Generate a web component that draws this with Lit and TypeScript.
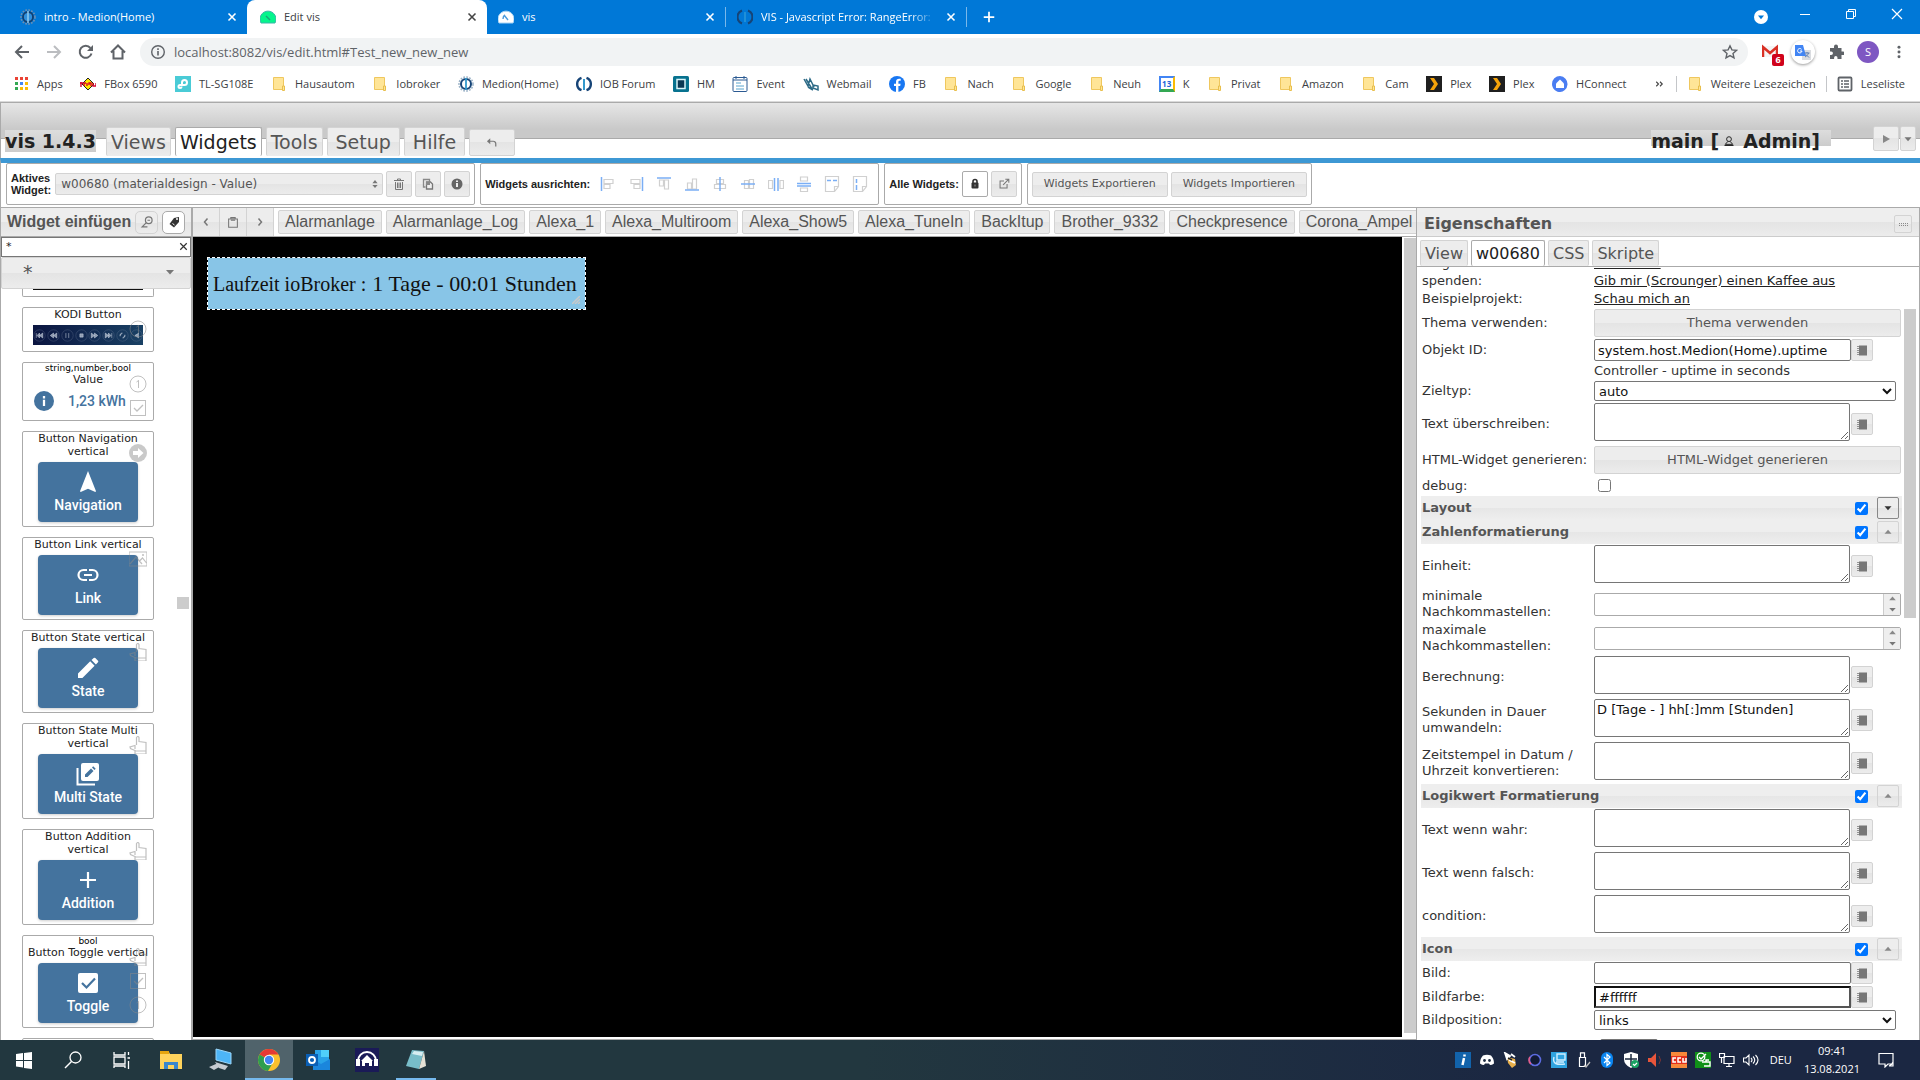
import { LitElement, html, svg, css, nothing, TemplateResult } from "lit";
import { customElement } from "lit/decorators.js";
import { classMap } from "lit/directives/class-map.js";

const icon = (body: unknown, size = 16, box = 16) => html`<svg
  width=${size} height=${size} viewBox="0 0 ${box} ${box}" aria-hidden="true">${body}</svg>`;

const line = (d: string, color: string, w = 1) =>
  svg`<path d=${d} fill="none" stroke=${color} stroke-width=${w} />`;
const fill = (d: string, color: string) => svg`<path d=${d} fill=${color} />`;

const glyph = {
  iob: svg`<circle cx="8" cy="8" r="6.500" fill="#fff"/><path d="M5.500 1.800a6.600 6.600 0 0 0 0 12.400M10.500 1.800a6.600 6.600 0 0 1 0 12.400" fill="none" stroke="#164477" stroke-width="2.400"/><path d="M8 3v11" stroke="#3399cc" stroke-width="2"/>`,
  iobGear: svg`<circle cx="8" cy="8" r="7" fill="none" stroke="#9db4c8" stroke-width="1.600" stroke-dasharray="1.800 1.200"/><circle cx="8" cy="8" r="5" fill="#fff" stroke="#164477" stroke-width="2"/><path d="M8 2v12" stroke="#3399cc" stroke-width="1.800"/>`,
  iobTab: svg`<circle cx="8" cy="8" r="7" fill="none" stroke="#6c8fb3" stroke-width="1.600" stroke-dasharray="1.800 1.200"/><circle cx="8" cy="8" r="5" fill="#2f8fdc" stroke="#123f70" stroke-width="1.800"/><path d="M8 2v12" stroke="#8cc8ee" stroke-width="1.600"/>`,
  iobDark: svg`<path d="M5 1.600a6.800 6.800 0 0 0 0 12.800M11 1.600a6.800 6.800 0 0 1 0 12.800" fill="none" stroke="#164477" stroke-width="2.200"/><path d="M8 3v10" stroke="#1f8fd8" stroke-width="2"/>`,
  gaugeGreen: svg`<path d="M1 14a8 8 0 1 1 14 0z" fill="#05f58c" stroke="#3bb5a8"/><path d="M6 7l4 4" stroke="#1aa37a" stroke-width="1.500"/>`,
  gaugeWhite: svg`<path d="M1 14a8 8 0 1 1 14 0z" fill="#fff" stroke="#a8d4f5"/><path d="M6 6l4 5M5 10q0-3 2-4" stroke="#4b9bdc" stroke-width="1.400" fill="none"/>`,
  apps: svg`${["#ea4335", "#ea4335", "#ea4335", "#34a853", "#4285f4", "#fbbc05", "#34a853", "#fbbc05", "#fbbc05"].map(
    (c, i) => svg`<rect x=${2 + (i % 3) * 5} y=${1 + Math.floor(i / 3) * 5} width="3" height="3" fill=${c}/>`)}`,
  fritz: svg`<path d="M8 2l6 6-6 6-6-6z" fill="#ffe600" stroke="#222"/><path d="M0 7h3M1 6v5M4 10V7h2M7 7v3M9 9V7h2v3M13 7v3h3V7" stroke="#d40030" stroke-width="1.400" fill="none"/>`,
  tp: svg`<rect width="16" height="16" fill="#4acbd6"/><path d="M7 9V6.500a2.500 2.500 0 1 1 2.500 2.500H5a1.500 1.500 0 1 0 1.500 1.500" fill="none" stroke="#fff" stroke-width="2"/>`,
  folder: svg`<path d="M2.500 1.500h10v12h-10z" fill="#ffe597" stroke="#efc75e"/><path d="M11.500 10v4.500h2V10z" fill="#ffe597" stroke="#e8bf4c"/>`,
  hm: svg`<rect width="16" height="16" rx="1.500" fill="#07728f"/><rect x="4" y="3.500" width="8" height="9" fill="#0b3954" stroke="#d9f5fa" stroke-width="1.500"/>`,
  event: svg`<rect x="1" y="1.500" width="14" height="14" rx="1" fill="#fff" stroke="#2b5a92"/><path d="M1 4h14M4 0v3M12 0v3" stroke="#2b5a92"/><path d="M4 7h5M4 10h8M4 13h8" stroke="#58a4ce"/>`,
  webmail: svg`<path d="M1 3l4 7 2-7 4 8M3 3l6 10M10 9l5 1v4l-5-2zM5 11l5 3" fill="none" stroke="#2c6a86" stroke-width="1.500"/>`,
  fb: svg`<circle cx="8" cy="8" r="8" fill="#1877f2"/><path d="M7 16v-6H5V7.700h2V6c0-2.200 1.200-3.300 3.200-3.300l1.500.1v2h-1C9.800 4.800 9.400 5.300 9.400 6v1.700h2.200L11.200 10H9.400v6z" fill="#fff"/>`,
  plex: svg`<rect width="16" height="16" fill="#1f1f1f"/><path d="M4 2h4l4 6-4 6H4l4-6z" fill="#f5a30a"/>`,
  hconnect: svg`<path d="M8 0a8 8 0 1 1-1 16C3 15.500 0 12 0 8a8 8 0 0 1 8-8z" fill="#4a7df2"/><path d="M8 3.500l4 4V12H4V7.500z" fill="#fff"/>`,
  list: svg`<rect x="1.500" y="1.500" width="13" height="13" rx="1" fill="none" stroke="#5f6368" stroke-width="1.800"/><path d="M4 5h2M4 8h2M4 11h2M7 5h5M7 8h5M7 11h5" stroke="#5f6368" stroke-width="1.500"/>`,
  back: line("M15 8H2M8 2L2 8l6 6", "#5f6368", 2),
  forward: line("M1 8h13M8 2l6 6-6 6", "#bbbdc0", 2),
  reload: svg`${line("M13.500 9.500A6 6 0 1 1 12.400 4", "#5f6368", 2)}${fill("M15 1v6H9z", "#5f6368")}`,
  home: line("M1 8.500L8 1.500l7 7M3.500 7v7.500h9V7", "#5f6368", 2),
  info: svg`<circle cx="8" cy="8" r="6.300" fill="none" stroke="#5f6368" stroke-width="1.400"/><path d="M8 7v4.500M8 4.300v1.600" stroke="#5f6368" stroke-width="1.600"/>`,
  star: line("M8 1.800l1.900 4.100 4.500.5-3.400 3 1 4.500L8 11.600l-4 2.300 1-4.500-3.400-3 4.500-.5z", "#5f6368", 1.4),
  gmail: svg`<path d="M1 2h14v11H1z" fill="#f5f5f5"/><path d="M1 13V3l7 6 7-6v10" fill="none" stroke="#d93025" stroke-width="2.500"/>`,
  translate: svg`<rect x="7" y="6" width="9" height="10" fill="#dadce0"/><path d="M0 1h8l3 11H0z" fill="#4285f4"/><path d="M6.500 5.300A2.200 2.200 0 1 0 7 7H5" stroke="#fff" fill="none"/><path d="M9.500 9h5M12 8v1M13.500 9c-.5 2-2 3-3.500 4M11 10.500l3 3" stroke="#5f7fb0" fill="none"/>`,
  puzzle: fill("M6 2.500a2 2 0 0 1 4 0V4h3.500v3.500H15a1.800 1.800 0 0 1 0 3.600h-1.500V15h-4v-1.200a1.700 1.700 0 0 0-3.400 0V15H2v-4h1.200a1.700 1.700 0 0 0 0-3.500H2V4h4z", "#5f6368"),
  dots: svg`<circle cx="8" cy="2.500" r="1.700" fill="#5f6368"/><circle cx="8" cy="8" r="1.700" fill="#5f6368"/><circle cx="8" cy="13.500" r="1.700" fill="#5f6368"/>`,
  undo: svg`${line("M4 6h5.500a2.800 2.800 0 0 1 2.800 2.800V12", "#777", 1.4)}${fill("M6 2.500V9.500L2.200 6z", "#777")}`,
  user: svg`<circle cx="8" cy="5.500" r="3.200" fill="none" stroke="#222" stroke-width="1.300"/><path d="M6.500 8.500L3 12.500h10L9.500 8.500M2 14h12" fill="none" stroke="#222" stroke-width="1.300"/>`,
  trash: svg`<path d="M3 4.500h10M6.500 4V3h3v1M4.500 6v7.500h7V6M6.500 6.500v5.500M8 6.500v5.500M9.500 6.500v5.500" fill="none" stroke="#777"/>`,
  copy: svg`<path d="M5.500 11H3.500V3.500h6v2" fill="none" stroke="#888" stroke-width="1.300"/><path d="M6.500 6h4l2 2v5h-6z" fill="#eee" stroke="#777" stroke-width="1.300"/><path d="M6 6h4v3h-4z" fill="#888"/>`,
  infoFull: svg`<circle cx="8" cy="8" r="5.500" fill="#666"/><path d="M8 7v4M8 4.500v1.600" stroke="#eee" stroke-width="2"/>`,
  lock: svg`<path d="M6 7V5.500a2 2 0 0 1 4 0V7" fill="none" stroke="#333" stroke-width="1.600"/><rect x="4.500" y="6.500" width="7" height="6" rx="1" fill="#333"/><path d="M8 8.500v2" stroke="#999"/>`,
  extern: line("M8 4.500H3.500v8h8V8M9.500 2.500h4v4M13.500 2.500L7 9", "#777", 1.2),
  zoomOut: svg`<circle cx="10" cy="6" r="3.800" fill="none" stroke="#777" stroke-width="1.400"/><path d="M8.500 6h3M7 9l-4.500 4.500h6" fill="none" stroke="#777" stroke-width="1.400"/>`,
  tag: svg`<path d="M8 4l5-1v5l-5 5.500-4.500-3.500z" fill="#333"/><circle cx="11" cy="5" r="1" fill="#fff"/><path d="M6.500 9.500l2 1.500" stroke="#fff"/>`,
  left: line("M9.500 4.500L6.500 8l3 3.500", "#777", 1.5),
  right: line("M6.500 4.500L9.500 8l-3 3.500", "#777", 1.5),
  clip: line("M3 4.500h10v9.500H3zM5.500 4.500V3h5v1.500M5.500 6h5", "#777", 1.2),
  down: fill("M4 6h8l-4 4.500z", "#777"),
  downDark: fill("M4 6h8l-4 4.500z", "#333"),
  up: fill("M4 10h8L8 5.500z", "#888"),
  play: fill("M5 4v8l7-4z", "#888"),
  updown: fill("M5 7h6L8 3.500zM5 9h6l-3 3.500z", "#777"),
  grip: svg`<path d="M4 7.500h9M4 9.500h9" stroke="#888" stroke-dasharray="1 1"/>`,
  book: svg`<rect x="5" y="3.500" width="8" height="10" fill="#777"/><path d="M4 4v9" stroke="#777" stroke-width="1.500" stroke-dasharray="1 1"/>`,
  navigation: fill("M12 1L20 21.300l-.7.7L12 18.700 4.700 22l-.7-.7z", "#fff"),
  link: line("M11 17H7.500a5 5 0 0 1 0-10H11M13 7h3.500a5 5 0 0 1 0 10H13M8 12h8", "#fff", 2.2),
  pencil: fill("M2 17.600V22h4.400L18.600 9.700l-4.400-4.400zM22 6.300a1.200 1.200 0 0 0 0-1.600L19.300 2a1.200 1.200 0 0 0-1.600 0L15.500 4.100l4.400 4.400z", "#fff"),
  multi: svg`<path d="M1.500 6v16.500H19" fill="none" stroke="#fff" stroke-width="2"/><rect x="5" y="1" width="18" height="18" rx="2" fill="#fff"/><path d="M9 15v-2.500l6-6 2.500 2.500-6 6zM16 5.500l1.200-1.200 2.500 2.500L18.500 8z" fill="#44739e"/>`,
  plus: line("M12 4v16M4 12h16", "#fff", 2.2),
  toggle: svg`<rect x="2" y="2" width="20" height="20" rx="2" fill="#fff"/><path d="M6 12l4.500 4.500L19 7.500" fill="none" stroke="#44739e" stroke-width="2.200"/>`,
  one: svg`<circle cx="9" cy="9" r="8" fill="none" stroke="#8888" stroke-width="1"/><path d="M7.500 7L9.500 5.500V13" fill="none" stroke="#8888"/>`,
  tick: svg`<rect x="1.500" y="1.500" width="15" height="15" fill="none" stroke="#8888"/><path d="M5 9l3 3 6-6" fill="none" stroke="#8888" stroke-width="1.300"/>`,
  hand: svg`<path d="M6 13V9.500L1 11l.5 1.500L7 15h10V6.500L10 5.500V1.500Q9-.5 7.500 1.500V9M6 14.500V18h11v-4" fill="none" stroke="#8888" stroke-width="1.200"/>`,
  arrow: svg`<circle cx="9" cy="9" r="9" fill="#c2c2c2e0"/><path d="M4 7h5V4l5.500 5L9 14v-3H4z" fill="#fff"/>`,
  image: svg`<path d="M0 2h18v14H0zM1 14l6-7 6 7M10.500 11l3-3 4 5" fill="none" stroke="#8888" stroke-width="1.200"/><circle cx="14" cy="5" r="1" fill="#8888"/>`,
};

/* Alignment symbols: grey blocks beside a blue guide line. */
const G = "#d0d0d0";
const B = "#7aaef5";
const ALIGN: [string, string, string][] = [
  ["Links", "M4 3.500h9v4H4zM4 8.500h6v4H4z", "M1.500 1v14"],
  ["Rechts", "M3 3.500h9v4H3zM6 8.500h6v4H6z", "M14.500 1v14"],
  ["Oben", "M3.500 4h4v6h-4zM8.500 4h4v9h-4z", "M1 2h14"],
  ["Unten", "M3.500 7h4v6h-4zM8.500 3h4v10h-4z", "M1 14h14"],
  ["Mitte horizontal", "M4.500 3.500h7v4h-7zM2.500 8.500h11v4h-11z", "M8 1v14"],
  ["Mitte vertikal", "M4.500 4.500h4v8h-4zM9.500 3.500h4v9h-4z", "M1 8h14"],
  ["Gleiche Breite", "M.5 4.500h4v8h-4zM12 4.500h3.500v8H12z", "M6.500 2v13M10 2v13"],
  ["Gleiche Höhe", "M4.500 1h7v4h-7zM4.500 12h7v3.500h-7z", "M1 7.500h14M1 10h14"],
  ["Seite horizontal", "M1.500 .5h13v10l-4 5h-9zM14.500 10.500h-4v5", "M3 4.500h4M9 4.500h4"],
  ["Seite vertikal", "M1.500 .5h13v10l-4 5h-9zM14.500 10.500h-4v5", "M4.500 3v4M4.500 9v5"],
];

interface Bookmark { label: string; art: unknown; day?: boolean }
const b = (label: string, art: unknown, day = false): Bookmark => ({ label, art, day });
const BOOKMARKS: Bookmark[] = [
  b("Apps", glyph.apps), b("FBox 6590", glyph.fritz), b("TL-SG108E", glyph.tp),
  b("Hausautom", glyph.folder), b("Iobroker", glyph.folder), b("Medion(Home)", glyph.iobGear),
  b("IOB Forum", glyph.iob), b("HM", glyph.hm), b("Event", glyph.event), b("Webmail", glyph.webmail),
  b("FB", glyph.fb), b("Nach", glyph.folder), b("Google", glyph.folder), b("Neuh", glyph.folder),
  b("K", nothing, true), b("Privat", glyph.folder), b("Amazon", glyph.folder), b("Cam", glyph.folder),
  b("Plex", glyph.plex), b("Plex", glyph.plex), b("HConnect", glyph.hconnect),
];

const VIEWS = ["Alarmanlage", "Alarmanlage_Log", "Alexa_1", "Alexa_Multiroom", "Alexa_Show5",
  "Alexa_TuneIn", "BackItup", "Brother_9332", "Checkpresence", "Corona_Ampel"];

interface Card { title: string; type?: string; label: string; art: unknown; marks: unknown[] }
const CARDS: Card[] = [
  { title: "Button Navigation vertical", label: "Navigation", art: glyph.navigation, marks: [glyph.arrow] },
  { title: "Button Link vertical", label: "Link", art: glyph.link, marks: [glyph.image] },
  { title: "Button State vertical", label: "State", art: glyph.pencil, marks: [glyph.hand] },
  { title: "Button State Multi vertical", label: "Multi State", art: glyph.multi, marks: [glyph.hand] },
  { title: "Button Addition vertical", label: "Addition", art: glyph.plus, marks: [glyph.hand] },
  { title: "Button Toggle vertical", type: "bool", label: "Toggle", art: glyph.toggle, marks: [glyph.hand, glyph.tick, glyph.one] },
];

type Row = { kind: string; label: string; value?: string; open?: boolean };
const r = (kind: string, label: string, value = "", open = true): Row => ({ kind, label, value, open });
const ROWS: Row[] = [
  r("link", "Fragen und Antworten:", "Lies mich!"),
  r("link", "spenden:", "Gib mir (Scrounger) einen Kaffee aus"),
  r("link", "Beispielprojekt:", "Schau mich an"),
  r("action", "Thema verwenden:", "Thema verwenden"),
  r("input", "Objekt ID:", "system.host.Medion(Home).uptime"),
  r("note", "", "Controller - uptime in seconds"),
  r("select", "Zieltyp:", "auto"),
  r("area", "Text überschreiben:"),
  r("action", "HTML-Widget generieren:", "HTML-Widget generieren"),
  r("check", "debug:"),
  r("group", "Layout", "", false),
  r("group", "Zahlenformatierung"),
  r("area", "Einheit:"),
  r("spin", "minimale Nachkommastellen:"),
  r("spin", "maximale Nachkommastellen:"),
  r("area", "Berechnung:"),
  r("area", "Sekunden in Dauer umwandeln:", "D [Tage - ] hh[:]mm [Stunden]"),
  r("area", "Zeitstempel in Datum / Uhrzeit konvertieren:"),
  r("group", "Logikwert Formatierung"),
  r("area", "Text wenn wahr:"),
  r("area", "Text wenn falsch:"),
  r("area", "condition:"),
  r("group", "Icon"),
  r("input", "Bild:"),
  r("color", "Bildfarbe:", "#ffffff"),
  r("select", "Bildposition:", "links"),
  r("small", ""),
];

const reset = css`
  :host, * { box-sizing: border-box; }
  button, input, textarea, select { font: inherit; margin: 0; color: inherit; }
  button { padding: 0; border: 0; background: none; display: inline-flex; align-items: center; justify-content: center; white-space: nowrap; }
  a { color: inherit; text-decoration: none; }
  svg { display: block; flex: none; }
`;

const jq = css`
  .btn {
    border: 1px solid #d3d3d3; border-radius: 2px; color: #555;
    background: linear-gradient(#ededed 50%, #e4e4e4 50%, #ececec);
  }
  .btn.on { background: #fff; border-color: #aaa; color: #212121; }
`;

@customElement("browser-chrome")
class BrowserChrome extends LitElement {
  static styles = [reset, css`
    :host { display: block; flex: none; background: #fff; font: 11px/16px "Open Sans", "Noto Sans", sans-serif; color: #3c4043; border-bottom: 1px solid #dadada; }
    .strip { display: flex; height: 34px; background: #0078d7; color: #fff; }
    .tab { display: flex; align-items: center; gap: 8px; width: 240px; padding: 0 8px 0 13px; }
    .tab.first { width: 247px; padding-left: 20px; }
    .tab.active { background: #fff; color: #3c4043; border-radius: 8px 8px 0 0; }
    .tab.vis { padding-left: 11px; width: 238px; }
    .tab.last { padding-left: 11px; }
    .tab span { flex: 1; white-space: nowrap; overflow: hidden; }
    .tab.last span { mask-image: linear-gradient(90deg, #000 85%, transparent); }
    .bar { width: 1px; height: 20px; align-self: center; background: #7ab8ea; }
    .new { width: 44px; }
    .win { margin-left: auto; display: flex; align-items: center; }
    .win button { width: 46px; height: 28px; align-self: flex-start; }
    .win .drop { width: 14px; height: 14px; border-radius: 50%; background: #fff; margin-right: 14px; align-self: center; }
    .nav { display: flex; align-items: center; height: 36px; padding: 0 14px; gap: 16px; }
    .omni { flex: 1; display: flex; align-items: center; gap: 8px; height: 28px; margin: 0 -2px; padding: 0 10px; border-radius: 14px; background: #f1f3f4; font-size: 13px; color: #5f6368; }
    .url { flex: 1; min-width: 0; border: 0; background: none; outline: 0; color: #5f6368; padding: 0; height: 24px; }
    .ext { display: flex; align-items: center; gap: 13px; }
    .gmail { position: relative; }
    .count { position: absolute; right: -6px; bottom: -6px; width: 12px; height: 12px; border-radius: 2px; background: #d0021b; color: #fff; font: bold 9px/12px "Open Sans", sans-serif; text-align: center; }
    .tr { width: 24px; height: 24px; border-radius: 50%; box-shadow: 0 1px 3px #0006; }
    .avatar { width: 22px; height: 22px; border-radius: 50%; background: #7e57c2; color: #fff; }
    .marks { display: flex; align-items: center; height: 31px; padding: 0 15px 3px 13px; gap: 27px; white-space: nowrap; }
    .saved { flex: 1; display: flex; justify-content: space-between; }
    .mark { display: flex; align-items: center; gap: 8px; }
    .more { display: flex; align-items: center; gap: 10px; }
    .sep { width: 1px; height: 16px; background: #c4c6c9; }
    .day { width: 16px; height: 16px; border: 2px solid #4285f4; border-right-color: #fbbc04; border-bottom: 3px solid #34a853; font: bold 8px/11px "Open Sans", sans-serif; color: #2166d8; text-align: center; }
  `];
  render() {
    const x = (c: string) => icon(line("M4 4l8 8M12 4l-8 8", c, 1.8), 14);
    return html`
      <div class="strip" role="tablist">
        <div class="tab first" role="tab">${icon(glyph.iobTab)}<span>intro - Medion(Home)</span><button aria-label="Tab schließen">${x("#fff")}</button></div>
        <div class="tab active" role="tab">${icon(glyph.gaugeGreen)}<span>Edit vis</span><button aria-label="Tab schließen">${x("#444")}</button></div>
        <div class="tab vis" role="tab">${icon(glyph.gaugeWhite)}<span>vis</span><button aria-label="Tab schließen">${x("#fff")}</button></div>
        <i class="bar"></i>
        <div class="tab last" role="tab">${icon(glyph.iobDark)}<span>VIS - Javascript Error: RangeError:</span><button aria-label="Tab schließen">${x("#fff")}</button></div>
        <i class="bar"></i>
        <button class="new" aria-label="Neuer Tab">${icon(line("M8 2v12M2 8h12", "#fff", 2), 14)}</button>
        <div class="win">
          <button class="drop" aria-label="Tabs suchen">${icon(fill("M4 6h8l-4 5z", "#0078d7"), 12)}</button>
          <button aria-label="Minimieren">${icon(line("M3 8.500h10", "#fff"))}</button>
          <button aria-label="Verkleinern">${icon(line("M3.500 5.500h7v7h-7zM5.500 5.500v-2h7v7h-2", "#fff"))}</button>
          <button aria-label="Schließen">${icon(line("M3 3l10 10M13 3L3 13", "#fff", 1.2))}</button>
        </div>
      </div>
      <div class="nav">
        <button aria-label="Zurück">${icon(glyph.back)}</button>
        <button aria-label="Vorwärts">${icon(glyph.forward)}</button>
        <button aria-label="Neu laden">${icon(glyph.reload)}</button>
        <button aria-label="Startseite">${icon(glyph.home)}</button>
        <div class="omni">${icon(glyph.info)}
          <input class="url" aria-label="Adresse" value="localhost:8082/vis/edit.html#Test_new_new_new">
          <button aria-label="Lesezeichen">${icon(glyph.star)}</button></div>
        <div class="ext">
          <button class="gmail" aria-label="Gmail">${icon(glyph.gmail)}<b class="count">6</b></button>
          <button class="tr" aria-label="Übersetzen">${icon(glyph.translate)}</button>
          <button aria-label="Erweiterungen">${icon(glyph.puzzle)}</button>
          <button class="avatar">S</button>
          <button aria-label="Menü">${icon(glyph.dots, 14)}</button>
        </div>
      </div>
      <nav class="marks">
        <div class="saved">
          ${BOOKMARKS.map((m) => html`<a class="mark" href="#">${m.day ? html`<span class="day">13</span>` : icon(m.art)}${m.label}</a>`)}
        </div>
        <div class="more">
          ${icon(line("M3 5l3 3-3 3M8 5l3 3-3 3", "#444", 1.5), 12)}
          <i class="sep"></i><a class="mark" href="#">${icon(glyph.folder)}Weitere Lesezeichen</a>
          <i class="sep"></i><a class="mark" href="#">${icon(glyph.list)}Leseliste</a>
        </div>
      </nav>`;
  }
}

@customElement("vis-menu")
class VisMenu extends LitElement {
  static styles = [reset, jq, css`
    :host { display: block; flex: none; font: 19px/22px "DejaVu Sans", Verdana, sans-serif; color: #222; }
    .menu { display: flex; align-items: flex-end; height: 56px; padding: 0 4px; border-top: 1px solid #aaa; border-left: 1px solid #aaa;
      background: linear-gradient(#e6e6e6, #c9c9c9 75%, #c9c9c9) 0 0 / 100% 35px no-repeat, linear-gradient(#aaa, #aaa) 0 35px / 100% 1px no-repeat, #fff; }
    .brand, .user { font-weight: bold; height: 22px; margin-bottom: 6px; white-space: nowrap; }
    .brand { margin-right: 10px; background: linear-gradient(#ddd, #ccc); }
    .tabs { display: flex; gap: 4px; align-items: flex-end; }
    .tab { height: 29px; padding: 0 4px; border-bottom: 0; margin-bottom: 2px; }
    .tab.wide { padding: 0 8px; }
    .undo { width: 46px; height: 27px; margin-bottom: 2px; }
    .user { margin-left: auto; display: flex; align-items: center; margin-right: 42px; padding-right: 11px; background: linear-gradient(#ddd, #ccc) 0 0 / 100% 16px no-repeat; }
    .user svg { margin: 0 8px 0 4px; }
    .run { display: flex; gap: 1px; margin-bottom: 7px; }
    .run .go { width: 26px; height: 25px; }
    .run .pick { width: 16px; height: 25px; }
    .tools { display: flex; gap: 5px; height: 49px; padding: 0 6px 2px 5px; border-top: 5px solid #3d98d4; border-left: 1px solid #aaa; font-size: 11px; line-height: 12px; }
    .set { display: flex; align-items: center; border: 1px solid #aaa; border-radius: 2px; padding: 0 4px; gap: 3px; }
    .cap { font: bold 11px/12px "Liberation Sans", Arial, sans-serif; color: #222; white-space: nowrap; }
    .pick-widget { display: flex; justify-content: space-between; width: 328px; height: 22px; padding: 0 0 0 5px; font-size: 12px; margin-left: 1px; }
    .sq { width: 26px; height: 26px; }
    .align { display: flex; gap: 12px; padding: 0 6px 0 7px; }
    .long { height: 25px; padding: 0 11px; }
  `];
  render() {
    return html`
      <div class="menu">
        <span class="brand">vis 1.4.3</span>
        <div class="tabs">
          <button class="btn tab">Views</button><button class="btn tab on">Widgets</button>
          <button class="btn tab">Tools</button><button class="btn tab wide">Setup</button><button class="btn tab wide">Hilfe</button>
          <button class="btn undo" aria-label="Rückgängig">${icon(glyph.undo, 14)}</button>
        </div>
        <span class="user">main [${icon(glyph.user, 12)}Admin]</span>
        <div class="run"><button class="btn go" aria-label="Starten">${icon(glyph.play)}</button><button class="btn pick" aria-label="Auswahl">${icon(glyph.down, 14)}</button></div>
      </div>
      <div class="tools">
        <div class="set">
          <span class="cap">Aktives<br>Widget:</span>
          <button class="btn pick-widget">w00680 (materialdesign - Value)${icon(glyph.updown, 14)}</button>
          <button class="btn sq" aria-label="Löschen">${icon(glyph.trash)}</button>
          <button class="btn sq" aria-label="Kopieren">${icon(glyph.copy)}</button>
          <button class="btn sq" aria-label="Info">${icon(glyph.infoFull)}</button>
        </div>
        <div class="set"><span class="cap">Widgets ausrichten:</span>
          <div class="align">${ALIGN.map(([name, block, guide]) => html`<button aria-label=${name}>${icon(svg`${line(block, G, 1.2)}${line(guide, B, 1.5)}`)}</button>`)}</div>
        </div>
        <div class="set"><span class="cap">Alle Widgets:</span>
          <button class="btn sq on" aria-label="Sperren">${icon(glyph.lock)}</button>
          <button class="btn sq" aria-label="Öffnen">${icon(glyph.extern, 14)}</button>
        </div>
        <div class="set"><button class="btn long">Widgets Exportieren</button><button class="btn long">Widgets Importieren</button></div>
      </div>`;
  }
}

@customElement("widget-palette")
class WidgetPalette extends LitElement {
  static styles = [reset, jq, css`
    :host { display: flex; flex-direction: column; width: 193px; flex: none; min-height: 0; border-left: 1px solid #aaa; border-right: 2px solid #aaa; font: 11px/13px "DejaVu Sans", Verdana, sans-serif; color: #222; }
    .head { display: flex; align-items: center; gap: 4px; height: 29px; flex: none; padding: 0 6px; border-bottom: 1px solid #aaa; background: linear-gradient(#eee 50%, #e4e4e4 50%, #ececec); }
    .head b { flex: 1; font: bold 16px/20px "Liberation Sans", Arial, sans-serif; color: #555; white-space: nowrap; }
    .rnd { width: 23px; height: 23px; border-radius: 5px; }
    .search { display: flex; align-items: center; height: 20px; flex: none; border: 1px solid #767676; padding: 0 0 2px 4px; }
    .search input { flex: 1; min-width: 0; border: 0; outline: 0; padding: 0; height: 17px; }
    .kind { height: 32px; flex: none; display: flex; justify-content: space-between; padding: 0 12px 2px 21px; font-size: 19px; }
    .list { position: relative; flex: 1; min-height: 0; overflow: hidden; display: flex; flex-direction: column; gap: 10px; padding: 0 37px 0 21px; }
    .card { position: relative; flex: none; border: 1px solid #aaa; border-radius: 2px; padding: 0 4px 4px; text-align: center; display: flex; flex-direction: column; align-items: center; }
    .cut { height: 8px; border-top: 0; border-radius: 0 0 2px 2px; }
    .cut i { width: 110px; height: 1px; background: #111; }
    .type { font-size: 9px; line-height: 10px; color: #000; }
    .tile { width: 100px; height: 60px; margin-top: 4px; border-radius: 4px; background: #44739e; box-shadow: 0 1px 3px #0003; color: #fff; flex-direction: column; gap: 2px; font: 500 14px/18px Roboto, sans-serif; }
    .marks { position: absolute; right: 6px; top: 12px; display: flex; flex-direction: column; gap: 6px; }
    .kodi { width: 110px; height: 20px; margin: 4px 0 2px; background: linear-gradient(90deg, #0b1540, #1a4164); display: flex; align-items: center; justify-content: space-around; }
    .value { display: flex; align-items: center; gap: 14px; width: 100%; height: 20px; margin: 5px 0; padding-left: 7px; font: 500 14px/18px Roboto, sans-serif; color: #44739e; }
    .thumb { position: absolute; right: 2px; top: 308px; width: 12px; height: 12px; background: #ccc; }
    .next { height: 12px; }
  `];
  render() {
    const keys = ["M4 5v6M12 5L8 8l4 3zM8 5L5 8l3 3z", "M8 5L4 8l4 3zM12 5L8 8l4 3z", "M6 5v6M9.500 5v6", "M6 6h4v4H6z", "M4 5l4 3-4 3zM8 5l4 3-4 3z", "M4 5l4 3-4 3zM8 5l3 3-3 3zM12 5v6", "M5 9a3 3 0 0 1 3-4M11 7a3 3 0 0 1-3 4", "M11 5L6 8l5 3"];
    return html`
      <div class="head"><b>Widget einfügen</b>
        <button class="btn rnd" aria-label="Verkleinern">${icon(glyph.zoomOut, 14)}</button>
        <button class="btn rnd on" aria-label="Filter">${icon(glyph.tag)}</button></div>
      <div class="search"><input aria-label="Filter" value="*"><button aria-label="Leeren">${icon(line("M4 4l8 8M12 4l-8 8", "#333", 1.5), 13)}</button></div>
      <button class="btn kind"><span>*</span>${icon(glyph.down)}</button>
      <div class="list">
        <div class="card cut"><i></i></div>
        <div class="card"><span>KODI Button</span>
          <div class="kodi">${keys.map((k) => icon(svg`<circle cx="8" cy="8" r="7" fill="none" stroke="#7d8da855"/>${svg`<path d=${k} fill="#c9d2dfaa" stroke="#c9d2dfaa"/>`}`, 13))}</div>
          <div class="marks">${icon(glyph.one, 18, 18)}</div></div>
        <div class="card"><span class="type">string,number,bool</span><span>Value</span>
          <div class="value">${icon(svg`<circle cx="8" cy="8" r="8" fill="#44739e"/><path d="M8 7v5M8 4v2" stroke="#fff" stroke-width="1.800"/>`, 20)}1,23 kWh</div>
          <div class="marks">${icon(glyph.one, 18, 18)}${icon(glyph.tick, 18, 18)}</div></div>
        ${CARDS.map((c) => html`<div class="card">
          ${c.type ? html`<span class="type">${c.type}</span>` : nothing}<span>${c.title}</span>
          <button class="tile">${icon(c.art, 24, 24)}${c.label}</button>
          <div class="marks">${c.marks.map((m) => icon(m, 18, 18))}</div></div>`)}
        <div class="card next"></div>
        <i class="thumb"></i>
      </div>`;
  }
}

@customElement("view-canvas")
class ViewCanvas extends LitElement {
  static styles = [reset, jq, css`
    :host { display: flex; flex-direction: column; flex: 1; min-width: 0; font: 16px/20px "Liberation Sans", Arial, sans-serif; }
    .views { display: flex; align-items: center; gap: 4px; height: 29px; flex: none; overflow: hidden; border-bottom: 1px solid #aaa; }
    .steps { display: flex; align-self: stretch; }
    .step { width: 27px; border-radius: 0; border-width: 0 1px 0 0; }
    .tab { flex: none; height: 24px; padding: 0 6px; }
    .row { flex: 1; display: flex; min-height: 0; justify-content: space-between; padding-bottom: 2px; background: #fff; border-bottom: 1px solid #aaa; }
    .stage { position: relative; flex: 1; background: #000; }
    .widget { position: absolute; left: 14px; top: 20px; width: 379px; height: 53px; padding-left: 5px; display: flex; align-items: center; gap: 6px; background: #88c5e7 padding-box; border: 1px dashed #fff; color: #111; font: 20px/24px "Liberation Serif", "Times New Roman", serif; white-space: nowrap; }
    .widget big { font-size: 22px; }
    .grip { position: absolute; right: 5px; bottom: 5px; }
    .scroll { width: 12px; background: #ccc; margin: 1px 0 4px 2px; }
  `];
  render() {
    return html`
      <div class="views"><div class="steps">
        <button class="btn step" aria-label="Zurück">${icon(glyph.left)}</button>
        <button class="btn step" aria-label="Liste">${icon(glyph.clip, 14)}</button>
        <button class="btn step" aria-label="Weiter">${icon(glyph.right)}</button></div>
        ${VIEWS.map((v) => html`<button class="btn tab">${v}</button>`)}</div>
      <div class="row">
        <div class="stage"><div class="widget"><span>Laufzeit ioBroker :</span><big>1 Tage - 00:01 Stunden</big>
          <span class="grip">${icon(line("M0 8L8 0M3 8l5-5M6 8l2-2", "#c9c9c9", 1.5), 8, 8)}</span></div></div>
        <i class="scroll"></i>
      </div>`;
  }
}

@customElement("property-panel")
class PropertyPanel extends LitElement {
  static styles = [reset, jq, css`
    :host { display: flex; flex-direction: column; width: 504px; flex: none; min-height: 0; border: solid #aaa; border-width: 0 1px; font: 13px/16px "DejaVu Sans", Verdana, sans-serif; color: #333; }
    .head { display: flex; align-items: center; justify-content: space-between; height: 29px; flex: none; padding: 3px 7px 0; border-bottom: 1px solid #ccc; background: linear-gradient(#eee 50%, #e4e4e4 50%, #ececec); font-size: 16px; color: #555; }
    .mini { width: 18px; height: 18px; }
    .tabs { display: flex; gap: 3px; height: 30px; flex: none; padding: 3px 3px 0; border-bottom: 1px solid #aaa; font-size: 16px; }
    .tab { padding: 0 4px; height: 26px; border-bottom: 0; }
    .body { position: relative; flex: 1; min-height: 0; overflow: hidden; padding: 0 17px 0 4px; }
    .form { margin-top: -13px; }
    .row { display: grid; grid-template-columns: 172px 1fr; align-items: center; padding: 0 1px; min-height: 24px; }
    .row.link, .row.note { min-height: 18px; }
    .row.action { min-height: 30px; }
    .row.select { min-height: 22px; }
    .row.area { min-height: 43px; }
    .row.spin { min-height: 34px; }
    .row.check { min-height: 21px; }
    .control { display: flex; align-items: center; }
    a { text-decoration: underline; color: #222; }
    .wide { flex: 1; height: 28px; }
    input, textarea, select { color: #111; background: #fff; border: 1px solid #767676; border-radius: 2px; }
    .text { flex: 1; min-width: 0; height: 22px; padding: 0 3px; }
    .text.color { border-width: 2px; border-color: #111 #555 #555 #111; border-radius: 0; }
    .book { width: 22px; height: 22px; margin-right: 28px; flex: none; }
    select { flex: 1; height: 20px; padding: 0; margin-right: 5px; }
    textarea { flex: 1; min-width: 0; height: 38px; padding: 2px; margin: 1px 1px 4px 0; resize: both; overflow: hidden; }
    .spinner { flex: 1; display: flex; height: 23px; border: 1px solid #aaa; border-radius: 2px; }
    .spinner input { flex: 1; min-width: 0; border: 0; }
    .arrows { display: flex; flex-direction: column; width: 17px; border-left: 1px solid #ccc; }
    .arrows button { flex: 1; background: #eee; overflow: hidden; }
    input[type="checkbox"] { width: 13px; height: 13px; }
    .debug { margin-left: 4px; }
    .group { display: flex; align-items: center; height: 24px; padding: 0 3px 0 1px; background: linear-gradient(#eee 50%, #e6e6e6 50%, #eee); font-weight: bold; color: #555; }
    .group label { flex: 1; }
    .group .fold { width: 22px; height: 22px; margin-left: 9px; }
    .group .fold.shut { border-color: #888; }
    .small { width: 58px; height: 22px; margin: 4px 2px 0 3px; }
    .sbtn { width: 17px; height: 18px; margin-top: 6px; }
    .thumb { position: absolute; right: 3px; top: 42px; width: 12px; height: 309px; background: #ccc; }
  `];
  private book = () => html`<button class="btn book" aria-label="Auswählen">${icon(glyph.book)}</button>`;
  private control(row: Row, id: string): TemplateResult {
    switch (row.kind) {
      case "link": return html`<a id=${id} href="#">${row.value}</a>`;
      case "action": return html`<button id=${id} class="btn wide">${row.value}</button>`;
      case "input": return html`<input id=${id} class="text" .value=${row.value!}>${this.book()}`;
      case "color": return html`<input id=${id} class="text color" .value=${row.value!}>${this.book()}`;
      case "note": return html`<span>${row.value}</span>`;
      case "select": return html`<select id=${id}><option>${row.value}</option></select>`;
      case "area": return html`<textarea id=${id} .value=${row.value!}></textarea>${this.book()}`;
      case "check": return html`<input id=${id} class="debug" type="checkbox">`;
      case "small": return html`<input id=${id} class="small" aria-label="Abstand"><button class="btn sbtn" aria-label="Auswahl"></button>`;
      default: return html`<div class="spinner"><input id=${id}><div class="arrows">
        <button aria-label="Mehr">${icon(glyph.up, 13)}</button><button aria-label="Weniger">${icon(glyph.down, 13)}</button></div></div>`;
    }
  }
  render() {
    return html`
      <div class="head"><b>Eigenschaften</b><button class="btn mini" aria-label="Verkleinern">${icon(glyph.grip)}</button></div>
      <div class="tabs">${["View", "w00680", "CSS", "Skripte"].map((t) => html`<button class=${classMap({ btn: true, tab: true, on: t === "w00680" })}>${t}</button>`)}</div>
      <div class="body"><div class="form">
        ${ROWS.map((row, i) => {
          const id = `field-${i}`;
          return row.kind === "group"
            ? html`<div class="group"><label for=${id}>${row.label}</label><input id=${id} type="checkbox" checked>
                <button class=${classMap({ btn: true, fold: true, shut: !row.open })} aria-label="Gruppe umschalten">${icon(row.open ? glyph.up : glyph.downDark, 14)}</button></div>`
            : html`<div class="row ${row.kind}"><label for=${id}>${row.label}</label><div class="control">${this.control(row, id)}</div></div>`;
        })}</div><i class="thumb"></i></div>`;
  }
}

@customElement("task-bar")
class TaskBar extends LitElement {
  static styles = [reset, css`
    :host { display: flex; flex: none; height: 40px; background: linear-gradient(90deg, #22373f 45%, #1b2742 80%); color: #fff; font: 12px/18px "Open Sans", "Noto Sans", sans-serif; }
    .app { width: 48px; height: 40px; margin-right: 1px; }
    .app.open { background: #50636b; box-shadow: inset 0 -2px #76b9ed; }
    .app.used { box-shadow: inset 0 -2px #76b9ed; width: 40px; margin-left: 4px; }
    .tray { margin-left: auto; display: flex; align-items: center; gap: 8px; }
    .lang { font-size: 11px; margin: 0 4px 0 3px; }
    .clock { text-align: center; font-size: 11px; }
    .note { width: 36px; margin-right: 16px; }
  `];
  render() {
    const W = "#fff";
    const apps: [string, unknown, string][] = [
      ["Start", fill("M4 6l7-1v7H4zM12 5l8-1v8h-8zM4 13h7v6.500l-7-1zM12 13h8v8l-8-1z", W), ""],
      ["Suche", svg`<circle cx="14.500" cy="9.500" r="5.500" fill="none" stroke="#fff" stroke-width="1.300"/>${line("M10.500 13.500L4 20", W, 1.4)}`, ""],
      ["Aktive Anwendungen", line("M4 4v3h11V4M4 9h11v7H4zM4 20v-2h11v2M18.500 4v3M18.500 13v8M17.500 10h2.500", W, 1.3), ""],
      ["Explorer", svg`<path d="M1 4h9l1 2h12v15H1z" fill="#ffd35c"/><path d="M1 3h9v3H1z" fill="#e5a50f"/><path d="M5 21v-7h14v7h-4v-4H9v4z" fill="#3a86cc"/>`, ""],
      ["Computer", svg`<path d="M8 1l15 4v11L8 12z" fill="#4db5f7" stroke="#9bd7fb"/><path d="M7 14l13 4-3 4-6-2zM1 19l7-3 5 2-7 4z" fill="#c6ccd2"/>`, ""],
      ["Chrome", svg`<circle cx="12" cy="12" r="11" fill="#fbc02d"/><path d="M12 12L2.500 6.500A11 11 0 0 1 21.500 6.500H12z" fill="#e53935"/><path d="M2.500 6.500A11 11 0 0 0 11 23l5-8.500-4-2.500z" fill="#2e9e4f"/><circle cx="12" cy="12" r="5.200" fill="#fff"/><circle cx="12" cy="12" r="4.200" fill="#4285f4"/>`, "open"],
      ["Outlook", svg`<path d="M9 2h14v14H9z" fill="#29a3e8"/><path d="M15 2h8v7h-8z" fill="#50d0fa"/><path d="M7 11l8 5 9-5v11H7z" fill="#1b86dc"/><path d="M0 6h12v12H0z" fill="#0a5fb5"/><circle cx="6" cy="12" r="3" fill="none" stroke="#fff" stroke-width="1.800"/>`, ""],
      ["Haus", svg`<path d="M0 0h24v24H0z" fill="#1a1a57"/><path d="M3 13a9 9 0 0 1 18 0" fill="none" stroke="#fff" stroke-width="2"/><path d="M1 11h4v7H1zM19 11h4v7h-4zM12 7l6 6h-1v5h-3v-3h-4v3H7v-5H6z" fill="#fff"/>`, ""],
      ["Editor", svg`<path d="M8 2l12 1-5 18-13-3z" fill="#78bdc9"/><path d="M10 3l9 1-1 4-10-2z" fill="#d7eef2"/><path d="M20 3l2 15-7 3z" fill="#e5e1d5"/>`, "used"],
    ];
    const tray: [string, unknown][] = [
      ["Info", svg`<path d="M0 0h16v16H0z" fill="#1263ab"/><path d="M9 6l-1.500 7M9.500 2.500v2" stroke="#fff" stroke-width="2.500"/>`],
      ["Discord", svg`<path d="M4 3.500Q8 2 12 3.500q3 3 3 8-2 1.500-4 1.500l-1-1.500H6L5 13q-2 0-4-1.500 0-5 3-8z" fill="#fff"/><circle cx="5.500" cy="8.500" r="1.400" fill="#1f2e44"/><circle cx="10.500" cy="8.500" r="1.400" fill="#1f2e44"/>`],
      ["Biene", svg`<path d="M4 5l8 2 1 6-4 3-4-5z" fill="#e8b04c"/><path d="M2 1l5 3-3 3zM8 2l4 3M6 8l6 3" stroke="#fff" stroke-width="1.800" fill="#fff"/><path d="M5 6l4 2" stroke="#222" stroke-width="1.500"/>`],
      ["Ring", svg`<circle cx="8" cy="8" r="5.500" fill="#111a33" stroke="#5c6be0" stroke-width="1.600"/><path d="M4 12a5.500 5.500 0 0 1-1-7" stroke="#e05c8a" stroke-width="1.600" fill="none"/>`],
      ["Rechner", svg`<path d="M0 0h16v16H0z" fill="#2fa3df"/><path d="M6 2h8v6H6zM3 5c-2 7 3 8 11 7M5 10h8" fill="none" stroke="#cfeeff" stroke-width="1.400"/>`],
      ["USB", svg`${line("M4.500 5.500h6v9h-6zM5.500 5.500V.8h4v4.700", W, 1.2)}${line("M9 13l2 2 4-5", "#bbb", 1.3)}`],
      ["Bluetooth", svg`<rect x="2" width="12" height="16" rx="6" fill="#0a84f0"/>${line("M5 5l6 6-3 2.500v-11L11 5l-6 6", W, 1.2)}`],
      ["Sicherheit", svg`<path d="M8 0l7 2v5q0 6-7 9-7-3-7-9V2z" fill="#fff"/><path d="M8 2v12M2 7h12" stroke="#1c2a3f" stroke-width="1.500"/><circle cx="12" cy="12" r="4" fill="#19a363"/>${line("M10 12l1.500 1.500L14 11", W, 1.2)}`],
      ["Ton", svg`<path d="M1 6h3l5-5v14l-5-5H1z" fill="#e8553b"/><path d="M12 4q3 4 0 8" stroke="#7c3433" fill="none"/>`],
      ["CCU", svg`<path d="M0 0h16v16H0z" fill="#e3301c"/><path d="M0 0h16v4H0zM0 12h16v4H0z" fill="#f6883a"/><path d="M5 6H2v4h3M10 6H7v4h3M12 6v4h3V6" fill="none" stroke="#fff" stroke-width="1.500"/>`],
      ["Geprüft", svg`<path d="M0 0h16v16H0z" fill="#109018"/><circle cx="6" cy="5" r="3.800" fill="none" stroke="#fff" stroke-width="1.300"/>${line("M4 5l2 2 5-5M7 10h8v4H9M11 10V8h3", W, 1.4)}`],
      ["Netzwerk", line("M5 4.500h10v7H5zM10 11.500v3M7 14.500h6M.5 1.500h5v4h-5zM2.500 5v6", W, 1.2)],
      ["Lautstärke", line("M.5 6h2.500l3-3v10l-3-3H.5zM8 6q2 2 0 4M10 4.500q3.500 3.500 0 7M12.500 3q5 5 0 10", W, 1.1)],
    ];
    return html`
      ${apps.map(([n, g, c]) => html`<button class="app ${c}" aria-label=${n}>${icon(g, 24, 24)}</button>`)}
      <div class="tray">
        ${tray.map(([n, g]) => html`<button aria-label=${n}>${icon(g)}</button>`)}
        <span class="lang">DEU</span>
        <time class="clock">09:41<br>13.08.2021</time>
        <button class="note" aria-label="Mitteilungen">${icon(line("M1 1.500h14v10.500h-5l-3 3v-3H1zM11 14q3-1 4-4v4z", W, 1.2))}</button>
      </div>`;
  }
}

@customElement("app-root")
class AppRoot extends LitElement {
  static styles = css`
    :host { display: flex; flex-direction: column; height: 100vh; overflow: hidden; background: #fff; }
    .work { flex: 1; display: flex; min-height: 0; border-top: 1px solid #aaa; }
  `;
  render() {
    return html`
      <browser-chrome></browser-chrome>
      <vis-menu></vis-menu>
      <div class="work">
        <widget-palette></widget-palette>
        <view-canvas></view-canvas>
        <property-panel></property-panel>
      </div>
      <task-bar></task-bar>`;
  }
}
